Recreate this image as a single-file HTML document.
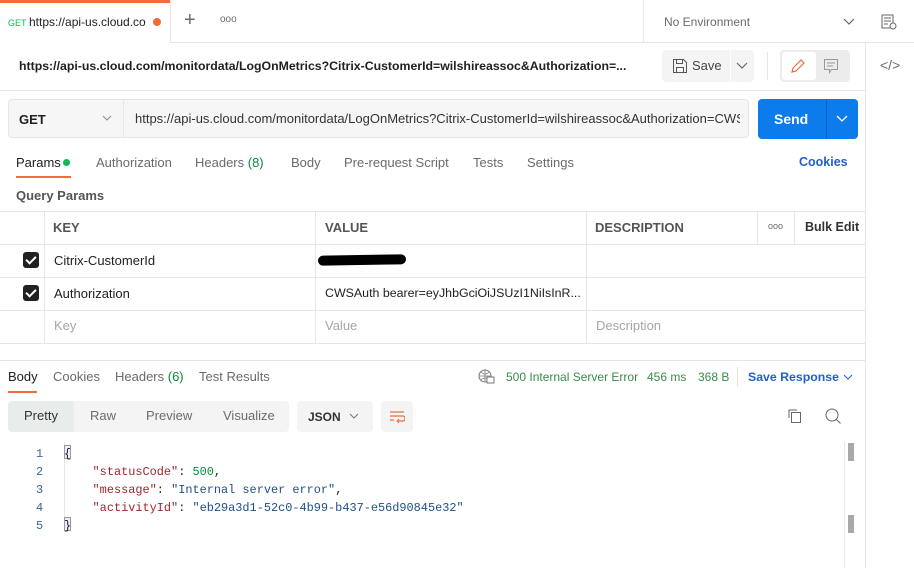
<html><head><style>
*{box-sizing:border-box;margin:0;padding:0}
body{width:914px;height:568px;background:#fff;font-family:"Liberation Sans",Arial,sans-serif;font-size:13px;color:#212121;position:relative;overflow:hidden}
.a{position:absolute;white-space:nowrap}
.g{color:#6b6b6b}
.hl{position:absolute;height:1px;background:#e6e6e6}
.vl{position:absolute;width:1px;background:#e6e6e6}
.cb{position:absolute;width:16px;height:16px;background:#212121;border-radius:3px;left:23px}
.cb:after{content:"";position:absolute;left:5px;top:2px;width:4px;height:8px;border:solid #fff;border-width:0 2px 2px 0;transform:rotate(45deg)}
.mono{font-family:"Liberation Mono",monospace;font-size:11.9px}
</style></head><body>
<div class="hl" style="left:0;top:42px;width:914px"></div>
<div class="a" style="left:0;top:0;width:170px;height:3px;background:#f26b3a"></div>
<div class="vl" style="left:170px;top:0;height:42px"></div>
<div class="a" style="left:0;top:3px;width:170px;height:40px;background:#fff"></div>
<div class="a" style="left:8px;top:18px;font-size:9px;color:#0cbb52">GET</div>
<div class="a" style="left:29px;top:15px;font-size:12px">https://api-us.cloud.co</div>
<div class="a" style="left:153px;top:18px;width:8px;height:8px;border-radius:50%;background:#f26b3a"></div>
<div class="a g" style="left:184px;top:9px;font-size:20px;font-weight:300">+</div>
<div class="a g" style="left:220px;top:14px;font-size:10px">ooo</div>
<div class="vl" style="left:643px;top:0;height:42px"></div>
<div class="a g" style="left:664px;top:15px;font-size:12px">No Environment</div>
<svg class="a" style="left:843px;top:18px" width="12" height="8"><path d="M1 1l5 5 5-5" fill="none" stroke="#666" stroke-width="1.2"/></svg>
<svg class="a" style="left:881px;top:14px" width="16" height="17"><rect x="1" y="1" width="11" height="13" fill="none" stroke="#666"/><path d="M3 4h7M3 7h7M3 10h4" stroke="#666"/><circle cx="12" cy="12" r="3" fill="#fff" stroke="#666"/></svg>
<div class="vl" style="left:865px;top:42px;height:526px"></div>
<div class="a g" style="left:880px;top:57px;font-size:14px">&lt;/&gt;</div>
<div class="a" style="left:19px;top:59px;font-size:12.3px;font-weight:bold">https://api-us.cloud.com/monitordata/LogOnMetrics?Citrix-CustomerId=wilshireassoc&amp;Authorization=...</div>
<div class="a" style="left:662px;top:50px;width:92px;height:32px;background:#f4f4f4;border-radius:4px"></div>
<div class="vl" style="left:730px;top:50px;height:32px;background:#fff"></div>
<svg class="a" style="left:672px;top:58px" width="16" height="16"><path d="M1.5 1.5h10l3 3v10h-13z M4.5 1.5v4h6v-4 M4.5 14.5v-5h7v5" fill="none" stroke="#555"/></svg>
<div class="a" style="left:692px;top:58px;color:#444">Save</div>
<svg class="a" style="left:736px;top:62px" width="12" height="8"><path d="M1 1l5 5 5-5" fill="none" stroke="#666" stroke-width="1.2"/></svg>
<div class="vl" style="left:767px;top:52px;height:28px"></div>
<div class="a" style="left:780px;top:50px;width:70px;height:32px;background:#ececec;border-radius:4px"></div>
<div class="a" style="left:782px;top:52px;width:34px;height:28px;background:#fff;border-radius:3px"></div>
<svg class="a" style="left:790px;top:58px" width="16" height="16"><path d="M2 14l1-4 8-8 3 3-8 8z" fill="none" stroke="#e8703a" stroke-width="1.2"/></svg>
<svg class="a" style="left:823px;top:58px" width="16" height="16"><path d="M1.5 1.5h13v10h-6l-2 3v-3h-5z M4 5h8M4 8h6" fill="none" stroke="#999"/></svg>
<div class="hl" style="left:0;top:90px;width:865px"></div>
<div class="a" style="left:8px;top:99px;width:741px;height:39px;background:#f6f6f6;border:1px solid #e6e6e6;border-radius:4px"></div>
<div class="vl" style="left:123px;top:100px;height:37px"></div>
<div class="a" style="left:19px;top:112px;font-weight:bold">GET</div>
<svg class="a" style="left:102px;top:115px" width="10" height="7"><path d="M1 1l4 4 4-4" fill="none" stroke="#888"/></svg>
<div class="a" style="left:135px;top:111px;width:605px;overflow:hidden;color:#333">https://api-us.cloud.com/monitordata/LogOnMetrics?Citrix-CustomerId=wilshireassoc&amp;Authorization=CWS</div>
<div class="a" style="left:758px;top:99px;width:100px;height:40px;background:#0c7bec;border-radius:4px"></div>
<div class="a" style="left:826px;top:99px;width:1px;height:40px;background:#0a63c4"></div>
<div class="a" style="left:774px;top:111px;color:#fff;font-weight:bold;font-size:14px">Send</div>
<svg class="a" style="left:836px;top:115px" width="12" height="8"><path d="M1 1l5 5 5-5" fill="none" stroke="#fff" stroke-width="1.3"/></svg>
<div class="a" style="left:16px;top:155px">Params</div>
<div class="a" style="left:63px;top:159px;width:7px;height:7px;border-radius:50%;background:#0cbb52"></div>
<div class="a" style="left:16px;top:176px;width:55px;height:2px;background:#f26b3a"></div>
<div class="a g" style="left:96px;top:155px">Authorization</div>
<div class="a g" style="left:195px;top:155px">Headers <span style="color:#0a8a3c">(8)</span></div>
<div class="a g" style="left:291px;top:155px">Body</div>
<div class="a g" style="left:344px;top:155px">Pre-request Script</div>
<div class="a g" style="left:473px;top:155px">Tests</div>
<div class="a g" style="left:527px;top:155px">Settings</div>
<div class="a" style="left:799px;top:155px;color:#2161c4;font-weight:bold;font-size:12.5px">Cookies</div>
<div class="a" style="left:16px;top:188px;font-weight:bold;color:#555">Query Params</div>
<div class="hl" style="left:0;top:211px;width:865px"></div>
<div class="hl" style="left:0;top:244px;width:865px"></div>
<div class="hl" style="left:0;top:277px;width:865px"></div>
<div class="hl" style="left:0;top:310px;width:865px"></div>
<div class="hl" style="left:0;top:343px;width:865px"></div>
<div class="vl" style="left:44px;top:211px;height:132px"></div>
<div class="vl" style="left:315px;top:211px;height:132px"></div>
<div class="vl" style="left:586px;top:211px;height:132px"></div>
<div class="vl" style="left:757px;top:211px;height:33px"></div>
<div class="vl" style="left:794px;top:211px;height:33px"></div>
<div class="a" style="left:53px;top:220px;font-weight:bold;color:#555">KEY</div>
<div class="a" style="left:325px;top:220px;font-weight:bold;color:#555">VALUE</div>
<div class="a" style="left:595px;top:220px;font-weight:bold;color:#555">DESCRIPTION</div>
<div class="a g" style="left:768px;top:221px;font-size:9px">ooo</div>
<div class="a" style="left:805px;top:220px;font-weight:bold;color:#333;font-size:12.5px">Bulk Edit</div>
<div class="cb" style="top:252px"></div>
<div class="a" style="left:54px;top:253px">Citrix-CustomerId</div>
<div class="a" style="left:318px;top:255px;width:88px;height:10px;background:#000;border-radius:6px;transform:rotate(-1deg)"></div>
<div class="cb" style="top:285px"></div>
<div class="a" style="left:54px;top:286px">Authorization</div>
<div class="a" style="left:325px;top:286px;font-size:12.4px">CWSAuth bearer=eyJhbGciOiJSUzI1NiIsInR...</div>
<div class="a" style="left:54px;top:318px;color:#a6a6a6">Key</div>
<div class="a" style="left:325px;top:318px;color:#a6a6a6">Value</div>
<div class="a" style="left:596px;top:318px;color:#a6a6a6">Description</div>
<div class="hl" style="left:0;top:360px;width:865px"></div>
<div class="a" style="left:8px;top:369px">Body</div>
<div class="a" style="left:8px;top:391px;width:29px;height:2px;background:#f26b3a"></div>
<div class="a g" style="left:53px;top:369px">Cookies</div>
<div class="a g" style="left:115px;top:369px">Headers <span style="color:#0a8a3c">(6)</span></div>
<div class="a g" style="left:199px;top:369px">Test Results</div>
<svg class="a" style="left:478px;top:369px" width="17" height="15"><circle cx="7" cy="7" r="6" fill="none" stroke="#777"/><path d="M1 7h12M7 1v12M3 3q4 4 8 0M3 11q4-4 8 0" fill="none" stroke="#777" stroke-width=".8"/><rect x="9" y="8" width="7" height="6" fill="#fff" stroke="#777"/></svg>
<div class="a" style="left:506px;top:370px;font-size:12px;color:#3a8a4a">500 Internal Server Error</div>
<div class="a" style="left:647px;top:370px;font-size:12px;color:#3a8a4a">456 ms</div>
<div class="a" style="left:698px;top:370px;font-size:12px;color:#3a8a4a">368 B</div>
<div class="vl" style="left:737px;top:367px;height:20px"></div>
<div class="a" style="left:748px;top:370px;color:#2161c4;font-weight:bold;font-size:12.3px">Save Response</div>
<svg class="a" style="left:843px;top:374px" width="10" height="7"><path d="M1 1l4 4 4-4" fill="none" stroke="#2161c4"/></svg>
<div class="a" style="left:8px;top:401px;width:281px;height:31px;background:#f4f4f4;border-radius:4px"></div>
<div class="a" style="left:8px;top:401px;width:66px;height:31px;background:#e8ecea;border-radius:4px 0 0 4px"></div>
<div class="a" style="left:24px;top:408px;color:#333">Pretty</div>
<div class="a g" style="left:90px;top:408px">Raw</div>
<div class="a g" style="left:146px;top:408px">Preview</div>
<div class="a g" style="left:223px;top:408px">Visualize</div>
<div class="a" style="left:297px;top:401px;width:76px;height:31px;background:#f4f4f4;border-radius:4px"></div>
<div class="a" style="left:308px;top:410px;font-weight:bold;font-size:12px;color:#333">JSON</div>
<svg class="a" style="left:349px;top:413px" width="10" height="7"><path d="M1 1l4 4 4-4" fill="none" stroke="#777"/></svg>
<div class="a" style="left:381px;top:401px;width:32px;height:31px;background:#f4f4f4;border-radius:4px"></div>
<svg class="a" style="left:389px;top:410px" width="16" height="14"><path d="M1 2h14M1 6h13q2 0 2 2.5t-2 2.5h-5M1 10h4" fill="none" stroke="#e8703a" stroke-width="1.2"/><path d="M10 9l-2 2 2 2" fill="none" stroke="#e8703a"/></svg>
<svg class="a" style="left:786px;top:408px" width="16" height="16"><path d="M3 10V2h8" fill="none" stroke="#666"/><rect x="5.5" y="4.5" width="9" height="10" fill="none" stroke="#666"/></svg>
<svg class="a" style="left:825px;top:408px" width="17" height="17"><circle cx="7" cy="7" r="6" fill="none" stroke="#666"/><path d="M11.5 11.5l4 4" stroke="#666"/></svg>
<div class="a mono" style="left:36px;top:445px;color:#37679a;line-height:18px">1<br>2<br>3<br>4<br>5</div>
<div class="vl" style="left:64px;top:442px;height:90px"></div>
<div class="a" style="left:64px;top:445px;width:7px;height:14px;border:1px solid #999;background:#eef"></div>
<div class="a" style="left:64px;top:517px;width:7px;height:14px;border:1px solid #999;background:#eef"></div>
<div class="a mono" style="left:64px;top:445px;line-height:18px;white-space:pre">{
    <span style="color:#a3262b">"statusCode"</span>: <span style="color:#0a8a3c">500</span>,
    <span style="color:#a3262b">"message"</span>: <span style="color:#1d4f8c">"Internal server error"</span>,
    <span style="color:#a3262b">"activityId"</span>: <span style="color:#1d4f8c">"eb29a3d1-52c0-4b99-b437-e56d90845e32"</span>
}</div>
<div class="vl" style="left:844px;top:442px;height:126px"></div>
<div class="a" style="left:848px;top:443px;width:6px;height:18px;background:#a8a8a8"></div>
<div class="a" style="left:848px;top:515px;width:6px;height:18px;background:#a8a8a8"></div>
</body></html>
